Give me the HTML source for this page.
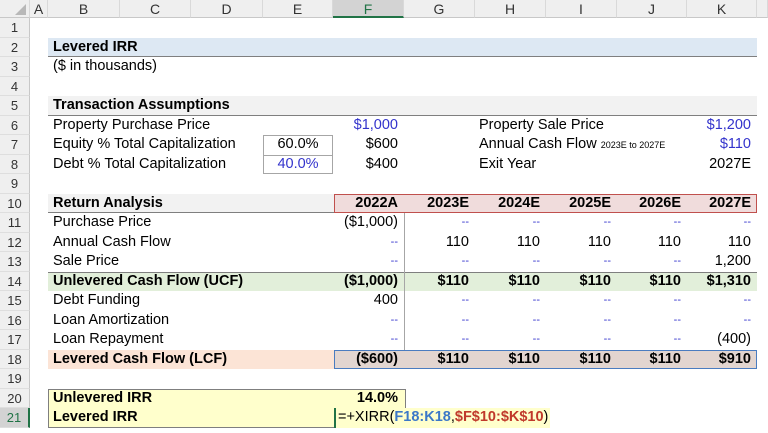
<!DOCTYPE html>
<html><head><meta charset="utf-8"><style>
body{margin:0;width:768px;height:433px;overflow:hidden;background:#fff;font-family:"Liberation Sans",Arial,sans-serif;font-size:14.5px;color:#000;position:relative}
.a{position:absolute;white-space:nowrap}
.c{position:absolute;height:19.5px;line-height:19.5px;white-space:nowrap;box-sizing:border-box}
.r{text-align:right;padding-right:6px;width:71px}
.b{font-weight:bold}
.bl{color:#3333cc}
.d{color:#3333cc;font-size:11px}
.hd{position:absolute;top:0;height:18px;line-height:18px;background:#efefef;text-align:center;color:#333;font-size:14px;border-right:1px solid #d9d9d9;box-sizing:border-box;border-bottom:1px solid #c8c8c8}
.rn{position:absolute;left:0;width:30px;height:19.5px;line-height:19.5px;text-align:center;color:#333;font-size:13px;background:#efefef;border-bottom:1px solid #dedede;box-sizing:border-box;border-right:1px solid #c8c8c8}
</style></head><body>
<div class="hd" style="left:0;width:30px"><svg width="30" height="18"><polygon points="26,4 26,15 15,15" fill="#b8b8b8"/></svg></div>
<div class="hd" style="left:30px;width:18px">A</div>
<div class="hd" style="left:48px;width:72px">B</div>
<div class="hd" style="left:120px;width:71px">C</div>
<div class="hd" style="left:191px;width:72px">D</div>
<div class="hd" style="left:263px;width:70px">E</div>
<div class="hd" style="left:333px;width:71px;background:#d3d3d3;border-bottom:2px solid #217346;color:#217346">F</div>
<div class="hd" style="left:404px;width:71px">G</div>
<div class="hd" style="left:475px;width:71px">H</div>
<div class="hd" style="left:546px;width:71px">I</div>
<div class="hd" style="left:617px;width:70px">J</div>
<div class="hd" style="left:687px;width:70px">K</div>
<div class="hd" style="left:757px;width:11px"></div>
<div class="rn" style="top:18px">1</div><div class="rn" style="top:37.5px">2</div><div class="rn" style="top:57px">3</div><div class="rn" style="top:76.5px">4</div><div class="rn" style="top:96px">5</div><div class="rn" style="top:115.5px">6</div><div class="rn" style="top:135px">7</div><div class="rn" style="top:154.5px">8</div><div class="rn" style="top:174px">9</div><div class="rn" style="top:193.5px">10</div><div class="rn" style="top:213px">11</div><div class="rn" style="top:232.5px">12</div><div class="rn" style="top:252px">13</div><div class="rn" style="top:271.5px">14</div><div class="rn" style="top:291px">15</div><div class="rn" style="top:310.5px">16</div><div class="rn" style="top:330px">17</div><div class="rn" style="top:349.5px">18</div><div class="rn" style="top:369px">19</div><div class="rn" style="top:388.5px">20</div><div class="rn" style="top:408px;background:#d3d3d3;color:#217346;border-right:2px solid #217346">21</div>

<div class="a" style="left:48px;top:37.5px;width:709px;height:19.5px;background:#dde8f3;border-bottom:1px solid #7f7f7f;box-sizing:border-box"></div>
<div class="a" style="left:48px;top:96px;width:709px;height:19.5px;background:#f2f2f2;border-bottom:1px solid #7f7f7f;box-sizing:border-box"></div>
<div class="a" style="left:48px;top:193.5px;width:709px;height:19.5px;background:#f2f2f2;border-bottom:1px solid #7f7f7f;box-sizing:border-box"></div>
<div class="a" style="left:334px;top:193.5px;width:423px;height:19.5px;background:#f0dcdc;border:1px solid #c0504d;box-sizing:border-box"></div>
<div class="a" style="left:48px;top:271.5px;width:709px;height:19.5px;background:#e2efda;border-top:1px solid #7f7f7f;box-sizing:border-box"></div>
<div class="a" style="left:48px;top:349.5px;width:709px;height:19.5px;background:#fce4d6;box-sizing:border-box"></div>
<div class="a" style="left:334px;top:349.5px;width:423px;height:19.5px;background:#e2d5d0;border:1px solid #4a7cc0;box-sizing:border-box"></div>
<div class="a" style="left:404px;top:213px;width:1px;height:137px;background:#a6a6a6"></div>
<div class="a" style="left:48px;top:388.5px;width:358px;height:39.5px;background:#ffffcc;border:1px solid #7f7f7f;box-sizing:border-box"></div>
<div class="a" style="left:263px;top:135px;width:70px;height:39px;border:1px solid #a6a6a6;box-sizing:border-box"></div>
<div class="a" style="left:263px;top:154.5px;width:70px;height:1px;background:#a6a6a6"></div>

<div class="c b" style="left:53px;top:37.5px">Levered IRR</div>
<div class="c" style="left:53px;top:57px">($ in thousands)</div>
<div class="c b" style="left:53px;top:96px">Transaction Assumptions</div>
<div class="c" style="left:53px;top:115.5px">Property Purchase Price</div>
<div class="c" style="left:53px;top:135px">Equity % Total Capitalization</div>
<div class="c" style="left:53px;top:154.5px">Debt % Total Capitalization</div>
<div class="c" style="left:263px;top:135px;width:70px;text-align:center">60.0%</div>
<div class="c bl" style="left:263px;top:154.5px;width:70px;text-align:center">40.0%</div>
<div class="c r bl" style="left:333px;top:115.5px">$1,000</div>
<div class="c r" style="left:333px;top:135px">$600</div>
<div class="c r" style="left:333px;top:154.5px">$400</div>
<div class="c" style="left:479px;top:115.5px">Property Sale Price</div>
<div class="c" style="left:479px;top:135px">Annual Cash Flow <span style="font-size:9px">2023E to 2027E</span></div>
<div class="c" style="left:479px;top:154.5px">Exit Year</div>
<div class="c r bl" style="left:686px;top:115.5px">$1,200</div>
<div class="c r bl" style="left:686px;top:135px">$110</div>
<div class="c r" style="left:686px;top:154.5px">2027E</div>

<div class="c b" style="left:53px;top:193.5px">Return Analysis</div>
<div class="c r b" style="left:333px;top:193.5px">2022A</div>
<div class="c r b" style="left:404px;top:193.5px">2023E</div>
<div class="c r b" style="left:475px;top:193.5px">2024E</div>
<div class="c r b" style="left:546px;top:193.5px">2025E</div>
<div class="c r b" style="left:616px;top:193.5px">2026E</div>
<div class="c r b" style="left:686px;top:193.5px">2027E</div>

<div class="c" style="left:53px;top:213px">Purchase Price</div>
<div class="c" style="left:53px;top:232.5px">Annual Cash Flow</div>
<div class="c" style="left:53px;top:252px">Sale Price</div>
<div class="c b" style="left:53px;top:271.5px">Unlevered Cash Flow (UCF)</div>
<div class="c" style="left:53px;top:291px">Debt Funding</div>
<div class="c" style="left:53px;top:310.5px">Loan Amortization</div>
<div class="c" style="left:53px;top:330px">Loan Repayment</div>
<div class="c b" style="left:53px;top:349.5px">Levered Cash Flow (LCF)</div>

<div class="c r" style="left:333px;top:213px">($1,000)</div>
<div class="c r d" style="left:333px;top:232.5px">--</div>
<div class="c r d" style="left:333px;top:252px">--</div>
<div class="c r b" style="left:333px;top:271.5px">($1,000)</div>
<div class="c r" style="left:333px;top:291px">400</div>
<div class="c r d" style="left:333px;top:310.5px">--</div>
<div class="c r d" style="left:333px;top:330px">--</div>
<div class="c r b" style="left:333px;top:349.5px">($600)</div>

<div class="c r d" style="left:404px;top:213px">--</div><div class="c r d" style="left:475px;top:213px">--</div><div class="c r d" style="left:546px;top:213px">--</div><div class="c r d" style="left:616px;top:213px">--</div><div class="c r d" style="left:686px;top:213px">--</div>
<div class="c r" style="left:404px;top:232.5px">110</div><div class="c r" style="left:475px;top:232.5px">110</div><div class="c r" style="left:546px;top:232.5px">110</div><div class="c r" style="left:616px;top:232.5px">110</div><div class="c r" style="left:686px;top:232.5px">110</div>
<div class="c r d" style="left:404px;top:252px">--</div><div class="c r d" style="left:475px;top:252px">--</div><div class="c r d" style="left:546px;top:252px">--</div><div class="c r d" style="left:616px;top:252px">--</div><div class="c r" style="left:686px;top:252px">1,200</div>
<div class="c r b" style="left:404px;top:271.5px">$110</div><div class="c r b" style="left:475px;top:271.5px">$110</div><div class="c r b" style="left:546px;top:271.5px">$110</div><div class="c r b" style="left:616px;top:271.5px">$110</div><div class="c r b" style="left:686px;top:271.5px">$1,310</div>
<div class="c r d" style="left:404px;top:291px">--</div><div class="c r d" style="left:475px;top:291px">--</div><div class="c r d" style="left:546px;top:291px">--</div><div class="c r d" style="left:616px;top:291px">--</div><div class="c r d" style="left:686px;top:291px">--</div>
<div class="c r d" style="left:404px;top:310.5px">--</div><div class="c r d" style="left:475px;top:310.5px">--</div><div class="c r d" style="left:546px;top:310.5px">--</div><div class="c r d" style="left:616px;top:310.5px">--</div><div class="c r d" style="left:686px;top:310.5px">--</div>
<div class="c r d" style="left:404px;top:330px">--</div><div class="c r d" style="left:475px;top:330px">--</div><div class="c r d" style="left:546px;top:330px">--</div><div class="c r d" style="left:616px;top:330px">--</div><div class="c r" style="left:686px;top:330px">(400)</div>
<div class="c r b" style="left:404px;top:349.5px">$110</div><div class="c r b" style="left:475px;top:349.5px">$110</div><div class="c r b" style="left:546px;top:349.5px">$110</div><div class="c r b" style="left:616px;top:349.5px">$110</div><div class="c r b" style="left:686px;top:349.5px">$910</div>

<div class="c b" style="left:53px;top:388.5px">Unlevered IRR</div>
<div class="c b" style="left:53px;top:408px">Levered IRR</div>
<div class="c r b" style="left:333px;top:388.5px">14.0%</div>
<div class="a" style="left:334px;top:408px;width:72px;height:20px;border:2px solid #217346;box-sizing:border-box"></div>
<div class="c" style="left:336px;top:408px;background:#ffffcc;padding:0 2px">=+XIRR(<span style="color:#3c78c8;font-weight:bold">F18:K18</span>,<span style="color:#c0392b;font-weight:bold">$F$10:$K$10</span>)</div>
</body></html>
